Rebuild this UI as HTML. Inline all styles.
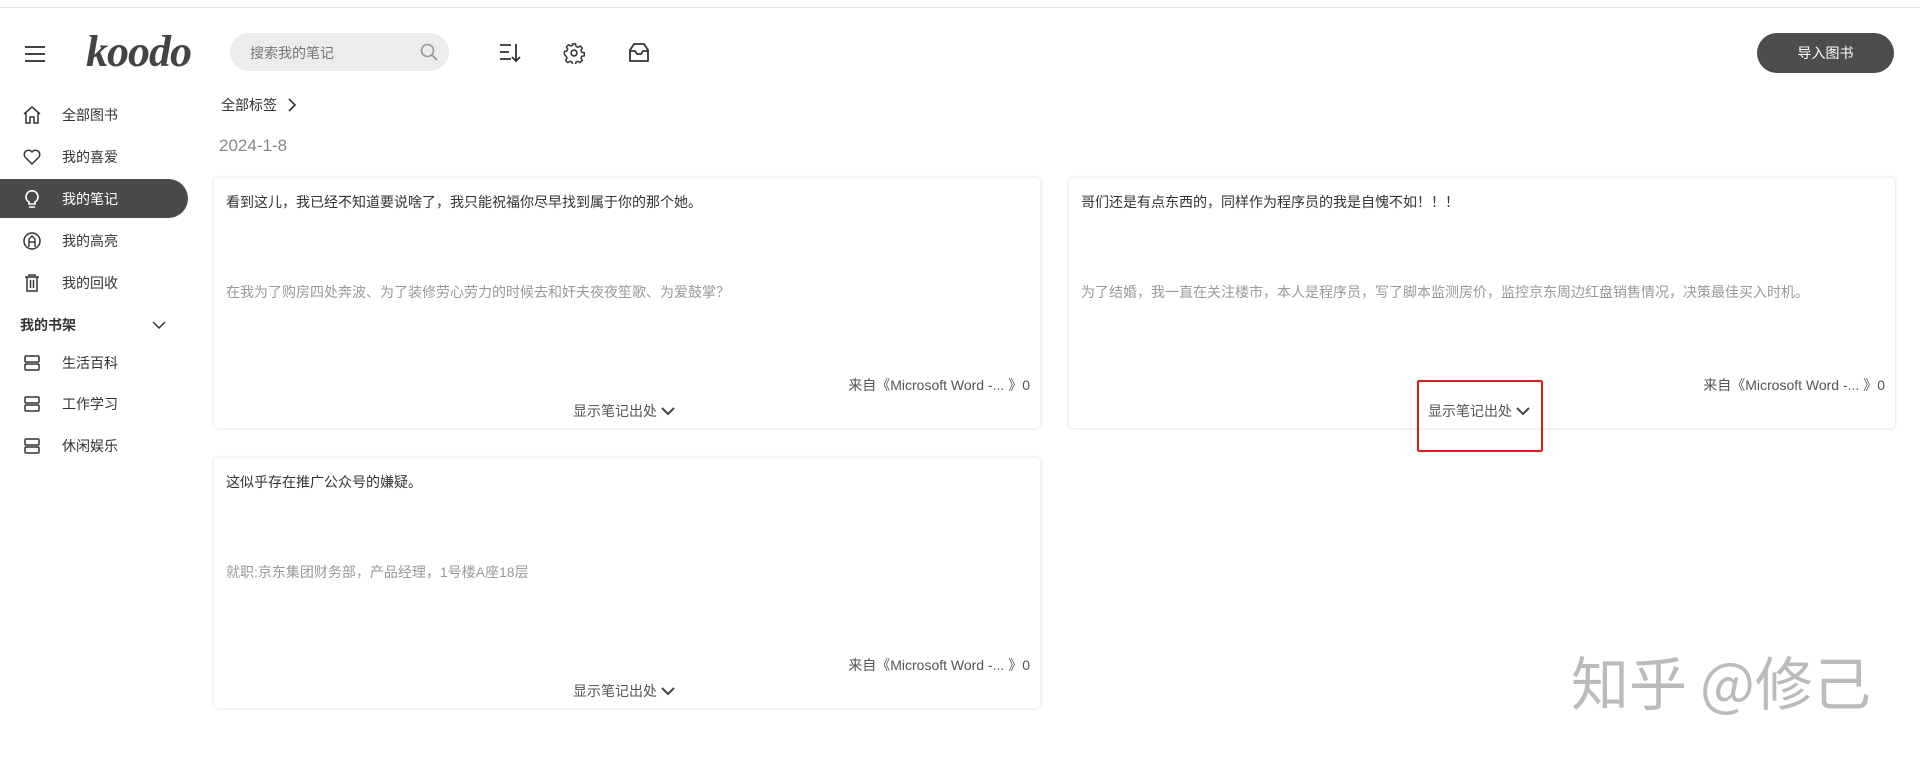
<!DOCTYPE html>
<html><head><meta charset="utf-8">
<style>
*{margin:0;padding:0;box-sizing:border-box}
body{width:1920px;height:759px;background:#fff;position:relative;overflow:hidden;font-family:"Liberation Sans","Noto Sans CJK SC",sans-serif;color:#333}
.abs{position:absolute}
.topline{left:0;top:7px;width:1920px;height:1px;background:#e4e4e4}
.logo{left:86px;top:26px;font-family:"Liberation Serif",serif;font-style:italic;font-weight:bold;font-size:44px;color:#444;letter-spacing:-1px}
.search{left:230px;top:33px;width:219px;height:38px;border-radius:19px;background:#ececec;font-size:14px;color:#777;padding:10px 0 0 20px}
.nav{left:22px;font-size:14px;color:#333;display:flex;align-items:center;height:40px}
.nav svg{width:20px;height:20px;margin-right:20px}
.active{left:0;top:179px;width:188px;height:39px;background:#4a4a4a;border-radius:0 20px 20px 0}
.card{background:#fff;border-radius:4px;box-shadow:0 0 4px rgba(0,0,0,.15)}
.t1{font-size:14px;color:#333}
.t2{font-size:14px;color:#999}
.src{font-size:14px;color:#555}
</style></head><body>
<div class="abs topline"></div>
<svg class="abs" style="left:24px;top:45px" width="22" height="18"><path d="M1 2H21M1 9H21M1 16H21" stroke="#444" stroke-width="2"/></svg>
<div class="abs logo">koodo</div>
<div class="abs search">搜索我的笔记
<svg style="position:absolute;left:190px;top:10px" width="18" height="18"><circle cx="7.5" cy="7.5" r="6" stroke="#999" stroke-width="1.6" fill="none"/><path d="M12 12L17 17" stroke="#999" stroke-width="1.6"/></svg></div>
<svg class="abs" style="left:499px;top:42px" width="22" height="22"><path d="M1 3H12M1 10H10M1 17H12M17 2V19M13 15L17 19L21 15" stroke="#333" stroke-width="1.8" fill="none"/></svg>
<svg class="abs" style="left:563px;top:42px" width="22" height="22" viewBox="0 0 24 24"><circle cx="12" cy="12" r="3.2" stroke="#333" stroke-width="1.7" fill="none"/><path d="M10.3 2h3.4l.5 2.8 2 1 2.5-1.5 2.4 2.4-1.5 2.5.9 2 2.8.5v3.4l-2.8.5-.9 2 1.5 2.5-2.4 2.4-2.5-1.5-2 .9-.5 2.8h-3.4l-.5-2.8-2-.9-2.5 1.5-2.4-2.4 1.5-2.5-.9-2L1.5 13.7v-3.4l2.8-.5.9-2L3.7 5.3l2.4-2.4 2.5 1.5 2-1z" stroke="#333" stroke-width="1.6" fill="none" stroke-linejoin="round"/></svg>
<svg class="abs" style="left:628px;top:42px" width="22" height="22"><path d="M2 8L6 2H16L20 8V19H2ZM2 9H7L9 12H13L15 9H20" stroke="#333" stroke-width="1.8" fill="none" stroke-linejoin="round"/></svg>
<div class="abs" style="left:1757px;top:33px;width:137px;height:40px;border-radius:20px;background:#4d4d4d;color:#fff;font-size:14px;text-align:center;line-height:40px">导入图书</div>

<div class="abs active"></div>
<div class="abs nav" style="top:95px"><svg viewBox="0 0 20 20"><path d="M2 9L10 2L18 9M4 7V18H8V12H12V18H16V7" stroke="#333" stroke-width="1.5" fill="none"/></svg>全部图书</div>
<div class="abs nav" style="top:137px"><svg viewBox="0 0 20 20"><path d="M10 17L3 10A4 4 0 0 1 10 5A4 4 0 0 1 17 10Z" stroke="#333" stroke-width="1.5" fill="none"/></svg>我的喜爱</div>
<div class="abs nav" style="top:179px;color:#fff"><svg viewBox="0 0 20 20"><path d="M7 13A6 6 0 1 1 13 13V15H7ZM7 18H13" stroke="#fff" stroke-width="1.6" fill="none"/></svg>我的笔记</div>
<div class="abs nav" style="top:221px"><svg viewBox="0 0 20 20"><circle cx="10" cy="10" r="8" stroke="#333" stroke-width="1.5" fill="none"/><path d="M7 16V8L10 5L13 8V16M7 11H13" stroke="#333" stroke-width="1.4" fill="none"/></svg>我的高亮</div>
<div class="abs nav" style="top:263px"><svg viewBox="0 0 20 20"><path d="M3 4H17M7 4V2H13V4M5 4V18H15V4M8.5 7V15M11.5 7V15" stroke="#333" stroke-width="1.5" fill="none"/></svg>我的回收</div>
<div class="abs" style="left:20px;top:315px;font-size:14px;font-weight:bold;color:#333">我的书架</div>
<svg class="abs" style="left:152px;top:320px" width="14" height="10"><path d="M1 2L7 8L13 2" stroke="#333" stroke-width="1.5" fill="none"/></svg>
<div class="abs nav" style="top:343px"><svg viewBox="0 0 20 20"><rect x="3" y="3" width="14" height="6" rx="1" stroke="#333" stroke-width="1.5" fill="none"/><rect x="3" y="11" width="14" height="6" rx="1" stroke="#333" stroke-width="1.5" fill="none"/></svg>生活百科</div>
<div class="abs nav" style="top:384px"><svg viewBox="0 0 20 20"><rect x="3" y="3" width="14" height="6" rx="1" stroke="#333" stroke-width="1.5" fill="none"/><rect x="3" y="11" width="14" height="6" rx="1" stroke="#333" stroke-width="1.5" fill="none"/></svg>工作学习</div>
<div class="abs nav" style="top:426px"><svg viewBox="0 0 20 20"><rect x="3" y="3" width="14" height="6" rx="1" stroke="#333" stroke-width="1.5" fill="none"/><rect x="3" y="11" width="14" height="6" rx="1" stroke="#333" stroke-width="1.5" fill="none"/></svg>休闲娱乐</div>

<div class="abs" style="left:221px;top:95px;font-size:14px;color:#333">全部标签</div>
<svg class="abs" style="left:287px;top:97px" width="10" height="16"><path d="M2 2L8 8L2 14" stroke="#333" stroke-width="1.6" fill="none"/></svg>
<div class="abs" style="left:219px;top:136px;font-size:17px;color:#888">2024-1-8</div>

<div class="abs card" style="left:214px;top:178px;width:826px;height:250px">
<div class="abs t1" style="left:12px;top:14px">看到这儿，我已经不知道要说啥了，我只能祝福你尽早找到属于你的那个她。</div>
<div class="abs t2" style="left:12px;top:104px">在我为了购房四处奔波、为了装修劳心劳力的时候去和奸夫夜夜笙歌、为爱鼓掌？</div>
<div class="abs src" style="right:10px;top:197px">来自《Microsoft Word -... 》0</div>
<div class="abs src" style="left:359px;top:223px">显示笔记出处 <svg width="14" height="9"><path d="M1 1L7 7L13 1" stroke="#444" stroke-width="2" fill="none"/></svg></div>
</div>
<div class="abs card" style="left:1069px;top:178px;width:826px;height:250px">
<div class="abs t1" style="left:12px;top:14px">哥们还是有点东西的，同样作为程序员的我是自愧不如！！！</div>
<div class="abs t2" style="left:12px;top:104px">为了结婚，我一直在关注楼市，本人是程序员，写了脚本监测房价，监控京东周边红盘销售情况，决策最佳买入时机。</div>
<div class="abs src" style="right:10px;top:197px">来自《Microsoft Word -... 》0</div>
<div class="abs src" style="left:359px;top:223px">显示笔记出处 <svg width="14" height="9"><path d="M1 1L7 7L13 1" stroke="#444" stroke-width="2" fill="none"/></svg></div>
</div>
<div class="abs card" style="left:214px;top:458px;width:826px;height:250px">
<div class="abs t1" style="left:12px;top:14px">这似乎存在推广公众号的嫌疑。</div>
<div class="abs t2" style="left:12px;top:104px">就职:京东集团财务部，产品经理，1号楼A座18层</div>
<div class="abs src" style="right:10px;top:197px">来自《Microsoft Word -... 》0</div>
<div class="abs src" style="left:359px;top:223px">显示笔记出处 <svg width="14" height="9"><path d="M1 1L7 7L13 1" stroke="#444" stroke-width="2" fill="none"/></svg></div>
</div>
<div class="abs" style="left:1417px;top:380px;width:126px;height:72px;border:2px solid #e02020;border-radius:2px"></div>
<div class="abs" style="left:1571px;top:638px;font-size:58px;color:#bbb;font-family:'Noto Sans CJK SC',sans-serif;white-space:nowrap">知乎 @修己</div>
</body></html>
